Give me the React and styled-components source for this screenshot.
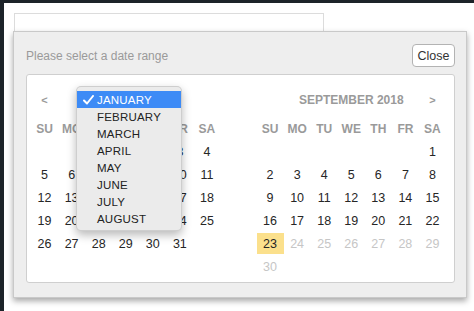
import React from "react";
import styled, { createGlobalStyle } from "styled-components";

const GlobalStyle = createGlobalStyle`
  html, body { margin: 0; padding: 0; background: #1c2329; }
  body { font-family: "Liberation Sans", Arial, sans-serif; }
  * { box-sizing: border-box; }
`;

const Page = styled.div`
  margin: 3px 0 0 4px;
  height: calc(100vh - 3px);
  background: #fff;
  padding: 10px 0 0 10px;
  overflow: hidden;
`;

const TextInput = styled.div`
  width: 310px;
  height: 18px;
  border: 1px solid #dcdcdc;
  border-bottom: none;
  background: #fff;
`;

const Panel = styled.div`
  margin-left: -1px;
  width: 454px;
  height: 267px;
  background: #eeeeee;
  border: 1px solid #c9c9c9;
  box-shadow: 0 3px 6px rgba(0, 0, 0, 0.35);
  padding: 12px 11px 14px 12px;
  display: flex;
  flex-direction: column;
  gap: 7px;
`;

const Header = styled.div`
  height: 23px;
  display: flex;
  align-items: center;
  justify-content: space-between;
`;

const Prompt = styled.span`
  font-size: 12px;
  color: #9a9a9a;
`;

const CloseButton = styled.button`
  width: 43px;
  height: 23px;
  padding: 0;
  background: #fff;
  border: 1px solid #b3b3b3;
  border-radius: 4px;
  font-family: "Liberation Sans", Arial, sans-serif;
  font-size: 12.5px;
  color: #333;
`;

const CalendarBox = styled.div`
  flex: none;
  height: 209px;
  background: #fff;
  border: 1px solid #cfcfcf;
  border-radius: 3px;
  padding: 14px 8px 0 4px;
  display: flex;
  gap: 36px;
`;

const Month = styled.div`
  position: relative;
  width: 190px;
`;

const Nav = styled.div`
  height: 22px;
  margin-bottom: 7px;
  display: grid;
  grid-template-columns: 27px 1fr 27px;
  align-items: center;
  text-align: center;
  color: #9a9a9a;
  font-weight: bold;
  font-size: 12px;
`;

const Arrow = styled.span`
  font-size: 11px;
`;

const Grid = styled.div`
  display: grid;
  grid-template-columns: repeat(7, 1fr);
  grid-auto-rows: 21px;
  row-gap: 2px;
  text-align: center;
`;

const Weekday = styled.div`
  display: flex;
  align-items: center;
  justify-content: center;
  font-weight: bold;
  font-size: 12px;
  color: #9a9a9a;
`;

const Day = styled.div`
  display: flex;
  align-items: center;
  justify-content: center;
  font-size: 12.5px;
  color: ${(p) => (p.$disabled ? "#c6c6c6" : "#262626")};
  background: ${(p) => (p.$selected ? "#fbe08c" : "transparent")};
`;

const Menu = styled.div`
  position: absolute;
  left: 45px;
  top: -3px;
  width: 106px;
  padding: 4px 0 3px;
  background: #ebebeb;
  border: 1px solid rgba(0, 0, 0, 0.12);
  border-radius: 5px;
  box-shadow: 0 4px 10px rgba(0, 0, 0, 0.28);
  z-index: 2;
`;

const MenuItem = styled.div`
  position: relative;
  height: 17px;
  display: flex;
  align-items: center;
  padding-left: 20px;
  font-size: 11.5px;
  letter-spacing: 0.2px;
  color: ${(p) => (p.$active ? "#fff" : "#222")};
  background: ${(p) => (p.$active ? "#3d8bf6" : "transparent")};
`;

const Check = styled.svg`
  position: absolute;
  left: 6px;
  top: 4px;
`;

const WEEKDAYS = ["SU", "MO", "TU", "WE", "TH", "FR", "SA"];
const MONTHS = ["JANUARY", "FEBRUARY", "MARCH", "APRIL", "MAY", "JUNE", "JULY", "AUGUST"];

function MonthView({ title, offset, days, prev, next, selected, menu }) {
  const cells = [];
  for (let i = 0; i < offset; i++) cells.push(<div key={"e" + i} />);
  for (let d = 1; d <= days; d++) {
    cells.push(
      <Day key={d} $selected={selected === d} $disabled={selected && d > selected}>
        {d}
      </Day>
    );
  }
  return (
    <Month>
      <Nav>
        <Arrow>{prev ? "<" : ""}</Arrow>
        <span>{title}</span>
        <Arrow>{next ? ">" : ""}</Arrow>
      </Nav>
      <Grid>
        {WEEKDAYS.map((w) => (
          <Weekday key={w}>{w}</Weekday>
        ))}
        {cells}
      </Grid>
      {menu && (
        <Menu>
          {MONTHS.map((m, i) => (
            <MenuItem key={m} $active={i === 0}>
              {i === 0 && (
                <Check width="11" height="10" viewBox="0 0 11 10">
                  <polyline points="1,5.5 4,8.5 10,1" fill="none" stroke="#fff" strokeWidth="2" strokeLinecap="round" strokeLinejoin="round" />
                </Check>
              )}
              {m}
            </MenuItem>
          ))}
        </Menu>
      )}
    </Month>
  );
}

export default function App() {
  return (
    <>
      <GlobalStyle />
      <Page>
        <TextInput />
        <Panel>
          <Header>
            <Prompt>Please select a date range</Prompt>
            <CloseButton>Close</CloseButton>
          </Header>
          <CalendarBox>
            <MonthView title="AUGUST 2018" offset={3} days={31} prev menu />
            <MonthView title="SEPTEMBER 2018" offset={6} days={30} next selected={23} />
          </CalendarBox>
        </Panel>
      </Page>
    </>
  );
}
